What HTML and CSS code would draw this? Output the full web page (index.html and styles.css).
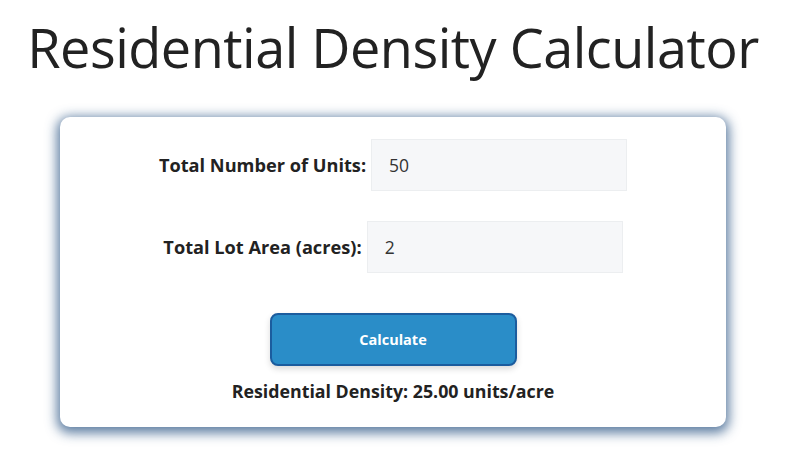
FILE: index.html
```html
<!DOCTYPE html>
<html lang="en">
<head>
<meta charset="utf-8">
<title>Residential Density Calculator</title>
<link rel="stylesheet" href="styles.css">
</head>
<body>
<h1 class="title">Residential Density Calculator</h1>
<div class="card">
  <div class="row">
    <label class="label" for="units">Total Number of Units:</label>
    <input class="field" id="units" type="text" value="50">
  </div>
  <div class="row">
    <label class="label" for="area">Total Lot Area (acres):</label>
    <input class="field" id="area" type="text" value="2">
  </div>
  <button class="btn" type="button">Calculate</button>
  <div class="result">Residential Density: 25.00 units/acre</div>
</div>
</body>
</html>
```
FILE: styles.css
```css
html, body {
  margin: 0;
  padding: 0;
  background: #ffffff;
}
body {
  font-family: "Open Sans", "Noto Sans", sans-serif;
  color: #222222;
  padding-top: 11px;
  padding-bottom: 35px;
}
.title {
  margin: 0;
  text-align: center;
  font-weight: 400;
  font-size: 54px;
  line-height: 72px;
  letter-spacing: -0.5px;
  color: #222222;
}
.card {
  width: 666px;
  height: 310px;
  box-sizing: border-box;
  margin: 34px auto 0;
  background: #ffffff;
  border-radius: 10px;
  box-shadow: 0 3px 12px 3px rgba(30, 75, 125, 0.72);
  padding-top: 22px;
  display: flex;
  flex-direction: column;
  align-items: center;
}
.row {
  display: flex;
  align-items: center;
  gap: 5px;
  margin-bottom: 30px;
}
.row + .row {
  margin-bottom: 40px;
}
.label {
  font-weight: 700;
  font-size: 18.2px;
  color: #222222;
}
.field {
  width: 256px;
  height: 52px;
  box-sizing: border-box;
  border: 1px solid #eceef0;
  background: #f6f7f9;
  padding: 0 17px;
  font-family: inherit;
  font-size: 17.5px;
  color: #333333;
  outline: none;
}
.btn {
  width: 247px;
  height: 53px;
  box-sizing: border-box;
  background: #2a8dc8;
  border: 2px solid #1b5c9e;
  border-radius: 8px;
  color: #ffffff;
  font-family: inherit;
  font-weight: 700;
  font-size: 14.5px;
  box-shadow: 0 3px 6px rgba(0, 0, 0, 0.15);
}
.result {
  margin-top: 13px;
  font-weight: 700;
  font-size: 17.8px;
  line-height: 24px;
  color: #222222;
}
```
